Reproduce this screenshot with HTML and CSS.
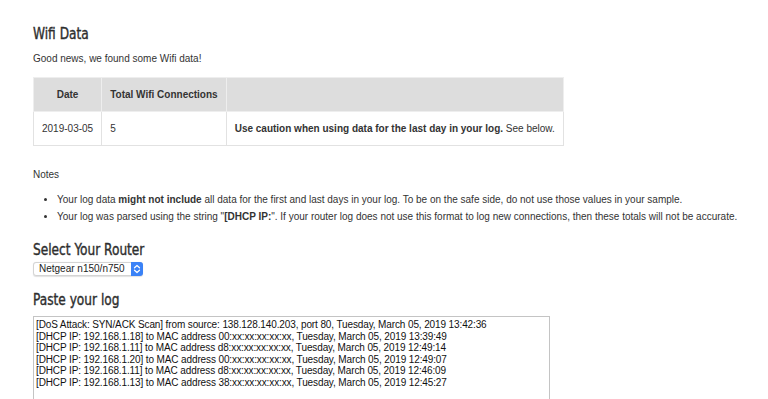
FILE: index.html
```html
<!DOCTYPE html>
<html>
<head>
<meta charset="utf-8">
<link rel="stylesheet" href="styles.css">
</head>
<body>
<main class="page">
  <h2 class="heading first">Wifi Data</h2>
  <p class="lead">Good news, we found some Wifi data!</p>
  <table class="results">
    <thead>
      <tr><th>Date</th><th>Total Wifi Connections</th><th></th></tr>
    </thead>
    <tbody>
      <tr><td>2019-03-05</td><td>5</td><td><strong>Use caution when using data for the last day in your log.</strong> See below.</td></tr>
    </tbody>
  </table>
  <p class="notes-title">Notes</p>
  <ul class="notes">
    <li>Your log data <strong>might not include</strong> all data for the first and last days in your log. To be on the safe side, do not use those values in your sample.</li>
    <li>Your log was parsed using the string "<strong>[DHCP IP:</strong>". If your router log does not use this format to log new connections, then these totals will not be accurate.</li>
  </ul>
  <h2 class="heading router-title">Select Your Router</h2>
  <div class="select">
    <span class="select-label">Netgear n150/n750</span>
    <span class="select-arrows"><svg width="8" height="10" viewBox="0 0 8 10"><path d="M1.5 3.8 L4 1.5 L6.5 3.8 M1.5 6.2 L4 8.5 L6.5 6.2" fill="none" stroke="#fff" stroke-width="1.2" stroke-linecap="round" stroke-linejoin="round"/></svg></span>
  </div>
  <h2 class="heading log-title">Paste your log</h2>
  <textarea class="log">[DoS Attack: SYN/ACK Scan] from source: 138.128.140.203, port 80, Tuesday, March 05, 2019 13:42:36
[DHCP IP: 192.168.1.18] to MAC address 00:xx:xx:xx:xx:xx, Tuesday, March 05, 2019 13:39:49
[DHCP IP: 192.168.1.11] to MAC address d8:xx:xx:xx:xx:xx, Tuesday, March 05, 2019 12:49:14
[DHCP IP: 192.168.1.20] to MAC address 00:xx:xx:xx:xx:xx, Tuesday, March 05, 2019 12:49:07
[DHCP IP: 192.168.1.11] to MAC address d8:xx:xx:xx:xx:xx, Tuesday, March 05, 2019 12:46:09
[DHCP IP: 192.168.1.13] to MAC address 38:xx:xx:xx:xx:xx, Tuesday, March 05, 2019 12:45:27</textarea>
</main>
</body>
</html>
```

FILE: styles.css
```css
html, body {
  margin: 0;
  padding: 0;
  background: #fff;
}
body {
  font-family: "Liberation Sans", Arial, sans-serif;
  font-size: 10px;
  color: #333;
  overflow: hidden;
}
.page {
  padding: 24px 0 0 33px;
}
.heading {
  font-family: "DejaVu Sans Condensed", "Liberation Sans Narrow", sans-serif;
  font-weight: normal;
  font-size: 16.5px;
  line-height: 20px;
  color: #2e2e2e;
  margin: 0;
  -webkit-text-stroke: 0.4px #2e2e2e;
  transform: scaleX(0.82);
  transform-origin: left center;
}
.lead {
  margin: 8px 0 11px;
  line-height: 14px;
}
.results {
  border-collapse: collapse;
  line-height: 13px;
}
.results th {
  background: #ddd;
  font-weight: bold;
  text-align: center;
  padding: 10px 8px;
  border: 1px solid #eee;
  height: 13px;
}
.results td {
  padding: 10px 8px;
  border: 1px solid #e2e2e2;
  text-align: left;
}
.notes-title {
  margin: 22px 0 0;
  line-height: 14px;
}
.notes {
  margin: 9px 0 0;
  padding-left: 24px;
  line-height: 17px;
}
.router-title {
  margin-top: 15px;
}
.select {
  margin-top: 2px;
  display: inline-flex;
  align-items: stretch;
  width: 110px;
  height: 14px;
  box-sizing: border-box;
  border: 1px solid #d4d4d4;
  border-radius: 3px;
  background: #fff;
  box-shadow: 0 0.5px 1px rgba(0,0,0,0.12);
}
.select-label {
  flex: 1;
  font-family: "Liberation Sans", Arial, sans-serif;
  font-size: 10px;
  line-height: 12px;
  padding-left: 5px;
  color: #222;
}
.select-arrows {
  width: 12px;
  margin: -1px -1px -1px 0;
  background: #3a82f7;
  border-radius: 0 3px 3px 0;
  display: flex;
  align-items: center;
  justify-content: center;
}
.log-title {
  margin-top: 14px;
}
.log {
  display: block;
  margin-top: 6px;
  width: 517px;
  height: 120px;
  box-sizing: border-box;
  border: 1px solid #c4c4c4;
  padding: 2px;
  font-family: "Liberation Sans", Arial, sans-serif;
  font-size: 10px;
  line-height: 11.6px;
  letter-spacing: -0.12px;
  color: #111;
  resize: none;
}
```
